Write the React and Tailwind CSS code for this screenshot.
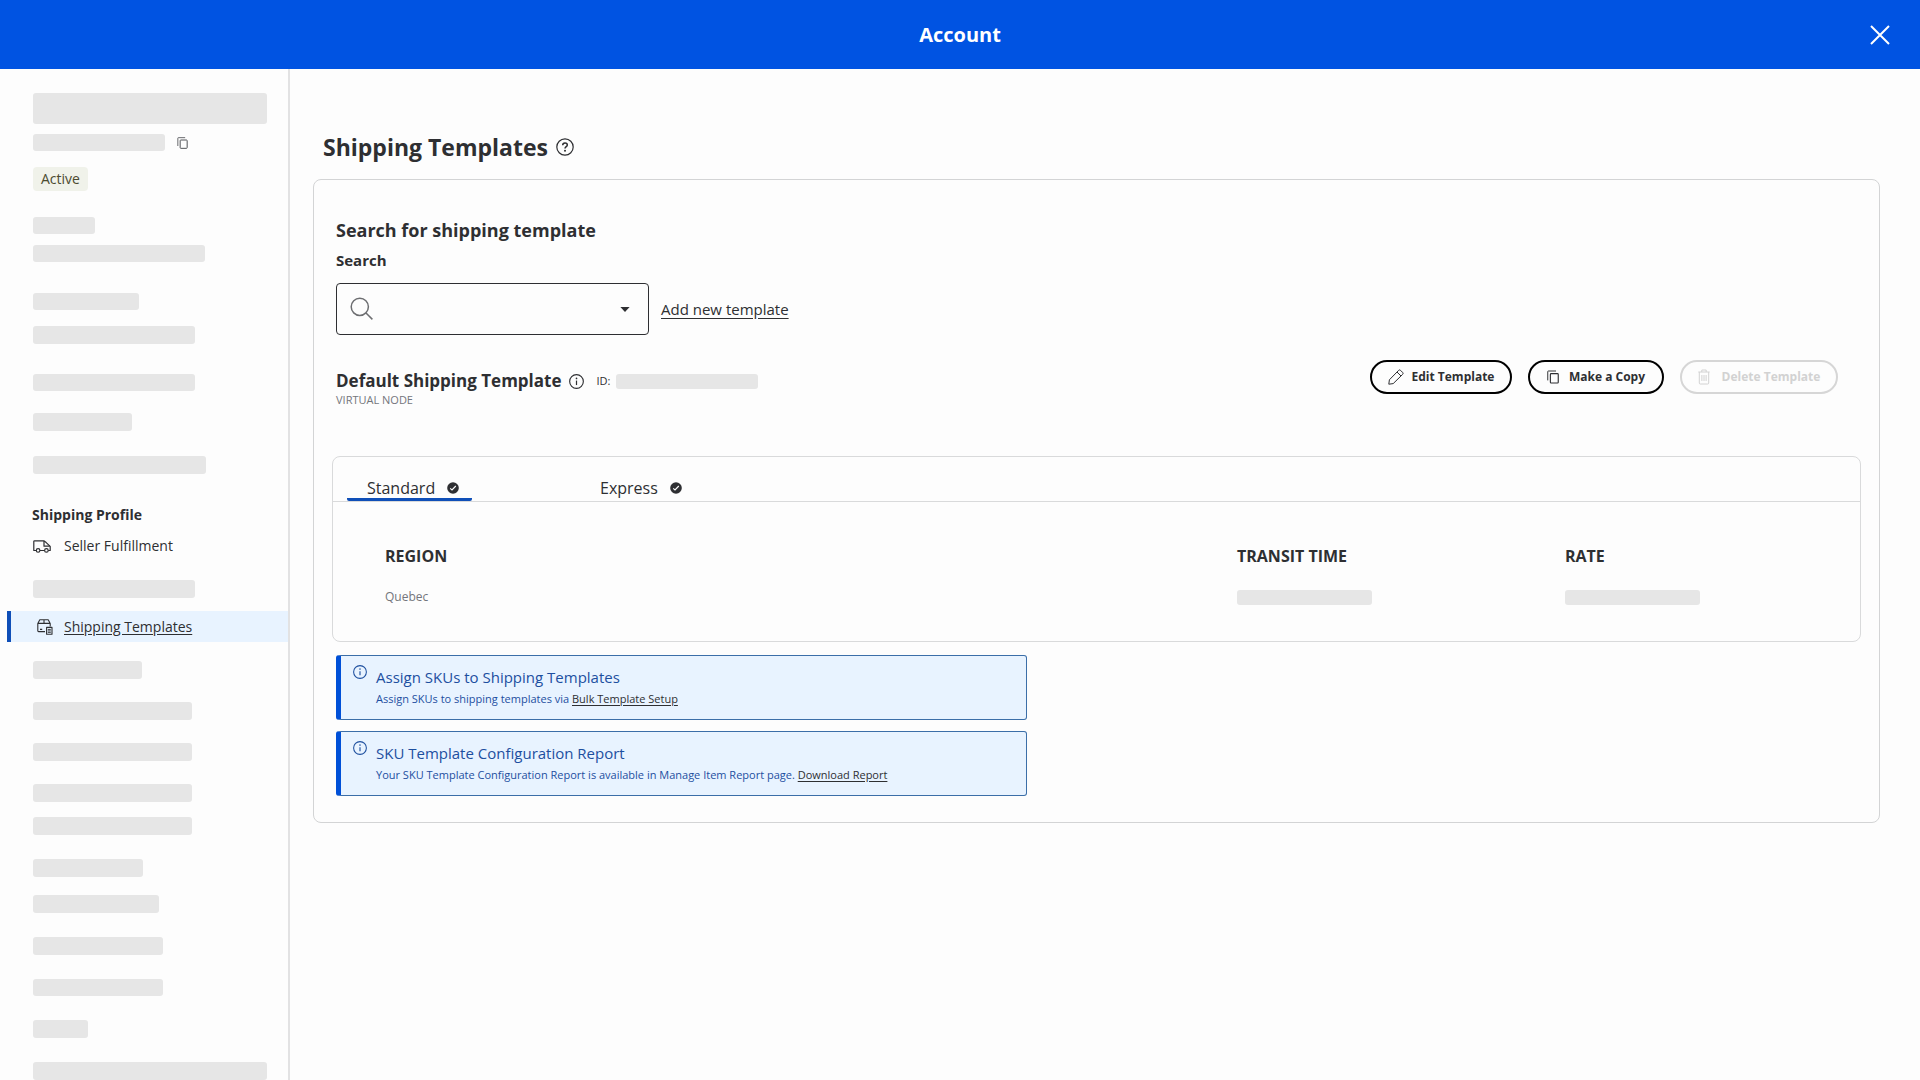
import React from "react";

const Bar = ({ className }) => (
  <div className={`rounded-[3px] bg-[#e6e6e6] ${className}`} />
);

const CopyIcon = ({ className }) => (
  <svg
    viewBox="0 0 16 18"
    className={className}
    fill="none"
    stroke="currentColor"
    aria-hidden="true"
  >
    <path d="M1 13.5V1.8a.8.8 0 0 1 .8-.8H12" strokeWidth="1.3" />
    <rect x="4.5" y="4.5" width="10.5" height="12.5" rx="1" strokeWidth="1.5" />
  </svg>
);

const InfoIcon = ({ className }) => (
  <svg
    viewBox="0 0 16 16"
    className={className}
    fill="none"
    stroke="currentColor"
    aria-hidden="true"
  >
    <circle cx="8" cy="8" r="7.3" strokeWidth="1.2" />
    <path d="M8 7v4.8" strokeWidth="1.3" />
    <circle cx="8" cy="4.7" r="0.9" fill="currentColor" stroke="none" />
  </svg>
);

const HelpIcon = () => (
  <svg
    viewBox="0 0 18 18"
    className="size-[18px]"
    fill="none"
    stroke="currentColor"
    aria-hidden="true"
  >
    <circle cx="9" cy="9" r="8.2" strokeWidth="1.2" />
    <path
      d="M6.7 7.2c0-1.4 1-2.3 2.3-2.3s2.3.9 2.3 2.1c0 1.6-2.3 1.7-2.3 3.5"
      strokeWidth="1.5"
    />
    <circle cx="9" cy="12.8" r="1" fill="currentColor" stroke="none" />
  </svg>
);

const CheckIcon = () => (
  <svg viewBox="0 0 12 12" className="size-3" aria-hidden="true">
    <circle cx="6" cy="6" r="5.8" fill="#2e2f32" />
    <path d="M3.2 6.4 5 8l3.8-4" fill="none" stroke="#fff" strokeWidth="1.1" />
  </svg>
);

const TruckIcon = () => (
  <svg
    viewBox="0 0 18 13"
    className="h-[13px] w-[18px]"
    fill="none"
    stroke="#2e2f32"
    strokeWidth="1.2"
    strokeLinejoin="round"
    aria-hidden="true"
  >
    <path d="M3.2 10.5H.8V1.6a.8.8 0 0 1 .8-.8h9.2l2.4 1.8 4 3.8v4.1h-2" />
    <path d="M7 10.5h4.4M11 1v5.2h5.8" />
    <circle cx="5.1" cy="10.4" r="1.8" />
    <circle cx="13.4" cy="10.4" r="1.8" />
  </svg>
);

const BoxIcon = () => (
  <svg
    viewBox="0 0 16 16"
    className="size-4"
    fill="none"
    stroke="#2e2f32"
    strokeWidth="1.1"
    strokeLinejoin="round"
    aria-hidden="true"
  >
    <path d="M8 12.6H1.6a.8.8 0 0 1-.8-.8V4.4L2.8.8h8.4l2 3.6v3M.8 4.4h12.4M7 .8v3.6M3 10.4h2.2" />
    <rect x="9.6" y="8.4" width="5.4" height="6.8" fill="#e8f3ff" />
    <path d="M10.8 10.4h3M10.8 11.9h3M10.8 13.4h3" strokeWidth="0.9" />
  </svg>
);

const PencilIcon = () => (
  <svg
    viewBox="0 0 16 16"
    className="size-4"
    fill="none"
    stroke="currentColor"
    strokeLinejoin="round"
    aria-hidden="true"
  >
    <path d="m.8 15.2.6-4.4L10.6 1.4a1.4 1.4 0 0 1 2 0l2 2a1.4 1.4 0 0 1 0 2L5.2 14.6zM9 3l4 4" />
  </svg>
);

const TrashIcon = () => (
  <svg
    viewBox="0 0 12 16"
    className="h-4 w-3"
    fill="none"
    stroke="currentColor"
    aria-hidden="true"
  >
    <path d="M.3 3h11.4M3.8 3V1h4.4v2M1.3 3v11a1 1 0 0 0 1 1h7.4a1 1 0 0 0 1-1V3M3.9 6v6M6 6v6M8.1 6v6" />
  </svg>
);

const Sidebar = () => {
  return (
    <aside className="w-[290px] shrink-0 border-r-2 border-[#e2e2e3] pt-6">
      {/* account summary */}
      <div className="px-[33px] pr-[21px]">
        <Bar className="h-[31px]" />
        <div className="mt-2.5 flex items-center">
          <Bar className="h-[17px] w-[132px]" />
          <button type="button" aria-label="Copy" className="ml-3 text-[#515357]">
            <CopyIcon className="h-3 w-[11px]" />
          </button>
        </div>
        <span className="mt-4 inline-block h-6 rounded-sm bg-[#f0f2ea] px-2 text-sm leading-6 text-[#4b4a30]">
          Active
        </span>
      </div>
      <div className="pl-[33px]">
        <Bar className="mt-[26px] h-[17px] w-[62px]" />
        <Bar className="mt-[11px] h-[17px] w-[172px]" />
        <Bar className="mt-[31px] h-[17px] w-[106px]" />
        <Bar className="mt-4 h-[18px] w-[162px]" />
        <Bar className="mt-[30px] h-[17px] w-[162px]" />
        <Bar className="mt-[22px] h-[18px] w-[99px]" />
        <Bar className="mt-[25px] h-[18px] w-[173px]" />
      </div>
      {/* shipping profile */}
      <nav>
        <h2 className="mt-[31px] pl-8 text-sm leading-5 font-bold text-[#2e2f32]">
          Shipping Profile
        </h2>
        <a
          href="#fulfillment"
          className="mt-[11px] flex items-center gap-[13px] pl-[33px] text-sm leading-5 text-[#2e2f32]"
        >
          <TruckIcon />
          Seller Fulfillment
        </a>
        <Bar className="mt-6 ml-[33px] h-[18px] w-[162px]" />
        <a
          href="#templates"
          className="mt-[13px] ml-[7px] flex h-[31px] items-center gap-[11px] border-l-4 border-[#0f4fb8] bg-[#e8f3ff] pl-[26px] text-sm text-[#2e2f32]"
        >
          <BoxIcon />
          <span className="underline underline-offset-2">
            Shipping Templates
          </span>
        </a>
      </nav>
      <div className="pl-[33px]">
        <Bar className="mt-[19px] h-[18px] w-[109px]" />
        <Bar className="mt-[23px] h-[18px] w-[159px]" />
        <Bar className="mt-[23px] h-[18px] w-[159px]" />
        <Bar className="mt-[23px] h-[18px] w-[159px]" />
        <Bar className="mt-[15px] h-[18px] w-[159px]" />
        <Bar className="mt-6 h-[18px] w-[110px]" />
        <Bar className="mt-[18px] h-[18px] w-[126px]" />
        <Bar className="mt-6 h-[18px] w-[130px]" />
        <Bar className="mt-6 h-[17px] w-[130px]" />
        <Bar className="mt-6 h-[18px] w-[55px]" />
        <Bar className="mt-6 h-[18px] w-[234px]" />
      </div>
    </aside>
  );
};

const Notice = ({ title, text, link }) => (
  <div className="flex min-h-[65px] max-w-[691px] gap-[9px] rounded-[3px] border border-l-[5px] border-[#3b6ea8] border-l-[#0050d8] bg-[#e8f3ff] pt-2 pl-3 text-[#1d4f9f]">
    <InfoIcon className="mt-px size-[14px] shrink-0" />
    <div>
      <h3 className="mt-px text-[15px] leading-6">{title}</h3>
      <p className="text-[11px] leading-5">
        {text}{" "}
        <a href="#more" className="text-[#2e2f32] underline underline-offset-2">
          {link}
        </a>
      </p>
    </div>
  </div>
);

const Tabs = () => (
  <div role="tablist" className="flex h-[45px] items-end border-b border-[#d9dadb] pl-[14px]">
    <button
      type="button"
      role="tab"
      aria-selected="true"
      className="flex w-[125px] items-center gap-3 rounded-b-xs border-b-3 border-[#0f4fb8] pl-5 text-base leading-5"
    >
      Standard
      <CheckIcon />
    </button>
    <button
      type="button"
      role="tab"
      aria-selected="false"
      className="ml-[108px] flex w-[125px] items-center gap-3 border-b-3 border-transparent pl-5 text-base leading-5"
    >
      Express
      <CheckIcon />
    </button>
  </div>
);

const TemplatePanel = () => {
  return (
    <section className="mt-4 rounded-lg border border-[#d3d4d5] px-[18px] pt-[38px] pb-[26px]">
      {/* search */}
      <div className="px-1">
        <h2 className="text-lg leading-6 font-bold">
          Search for shipping template
        </h2>
        <label htmlFor="search" className="mt-2 block text-[15px] leading-5 font-bold">
          Search
        </label>
        <div className="mt-[13px] flex items-center gap-3">
          <div className="relative h-[52px] w-[313px]">
            <select
              id="search"
              defaultValue=""
              className="size-full appearance-none rounded border border-[#2e2f32] bg-transparent pl-12"
            >
              <option value=""></option>
            </select>
            <svg
              viewBox="0 0 23 23"
              className="pointer-events-none absolute top-[14px] left-[14px] size-[23px]"
              fill="none"
              stroke="#6d6e71"
              strokeWidth="1.5"
              aria-hidden="true"
            >
              <circle cx="9.8" cy="9.8" r="8.6" />
              <path d="m16 16 6.4 6.4" />
            </svg>
            <svg
              viewBox="0 0 10 5"
              className="pointer-events-none absolute top-6 right-[19px] h-[5px] w-2.5"
              aria-hidden="true"
            >
              <path d="M.4 0h9.2L5 5z" fill="#2e2f32" />
            </svg>
          </div>
          <a href="#new" className="text-[15px] underline underline-offset-3">
            Add new template
          </a>
        </div>
      </div>

      {/* selected template */}
      <div className="mt-[25px] flex items-start justify-between pr-[23px] pl-1">
        <div className="pt-[9px]">
          <div className="flex items-center">
            <h2 className="text-[17px] leading-6 font-bold">
              Default Shipping Template
            </h2>
            <InfoIcon className="ml-2 size-[15px]" />
            <span className="ml-3 text-[11px]">ID:</span>
            <Bar className="ml-1.5 h-[15px] w-[142px]" />
          </div>
          <p className="text-[11px] leading-[14px] text-[#74767c]">
            VIRTUAL NODE
          </p>
        </div>
        <div className="flex gap-4 text-xs font-bold">
          <button
            type="button"
            className="flex h-[34px] w-[142px] items-center justify-center gap-2 rounded-full border-2 border-black"
          >
            <PencilIcon />
            Edit Template
          </button>
          <button
            type="button"
            className="flex h-[34px] w-[136px] items-center justify-center gap-2.5 rounded-full border-2 border-black"
          >
            <CopyIcon className="h-[14px] w-3" />
            Make a Copy
          </button>
          <button
            type="button"
            disabled
            className="flex h-[34px] w-[158px] items-center justify-center gap-3 rounded-full border-2 border-[#d6d6d6] text-[#d2d2d2]"
          >
            <TrashIcon />
            Delete Template
          </button>
        </div>
      </div>

      {/* rates */}
      <div className="mt-[49px] h-[186px] rounded-lg border border-[#d9dadb]">
        <Tabs />
        <table className="mt-[38px] w-full table-fixed text-left">
          <thead>
            <tr className="text-base leading-8">
              <th className="pl-[52px] font-bold">REGION</th>
              <th className="w-[328px] font-bold">TRANSIT TIME</th>
              <th className="w-[295px] font-bold">RATE</th>
            </tr>
          </thead>
          <tbody>
            <tr className="h-[50px] text-xs text-[#74767c]">
              <td className="pl-[52px]">Quebec</td>
              <td>
                <Bar className="h-[15px] w-[135px]" />
              </td>
              <td>
                <Bar className="h-[15px] w-[135px]" />
              </td>
            </tr>
          </tbody>
        </table>
      </div>

      {/* notices */}
      <div className="mt-[13px] flex flex-col gap-[11px] pl-1">
        <Notice
          title="Assign SKUs to Shipping Templates"
          text="Assign SKUs to shipping templates via"
          link="Bulk Template Setup"
        />
        <Notice
          title="SKU Template Configuration Report"
          text="Your SKU Template Configuration Report is available in Manage Item Report page."
          link="Download Report"
        />
      </div>
    </section>
  );
};

export default function App() {
  return (
    <div className="flex min-h-screen flex-col bg-[#fdfdfd] font-['Open_Sans','Noto_Sans',sans-serif] text-[#2e2f32]">
      <header className="relative flex h-[69px] items-center justify-center bg-[#0053e2] text-white">
        <h1 className="text-xl font-bold">Account</h1>
        <button
          type="button"
          aria-label="Close"
          className="absolute right-[30px]"
        >
          <svg
            viewBox="0 0 20 20"
            className="size-5"
            stroke="currentColor"
            strokeWidth="2"
            aria-hidden="true"
          >
            <path d="m1 1 18 18M19 1 1 19" />
          </svg>
        </button>
      </header>
      <div className="flex flex-1">
        <Sidebar />
        <main className="flex-1 pt-[62px] pr-10 pb-10 pl-[23px]">
          <div className="flex items-center gap-2 pl-2.5">
            <h1 className="text-[23px] leading-8 font-bold">
              Shipping Templates
            </h1>
            <HelpIcon />
          </div>
          <TemplatePanel />
        </main>
      </div>
    </div>
  );
}
